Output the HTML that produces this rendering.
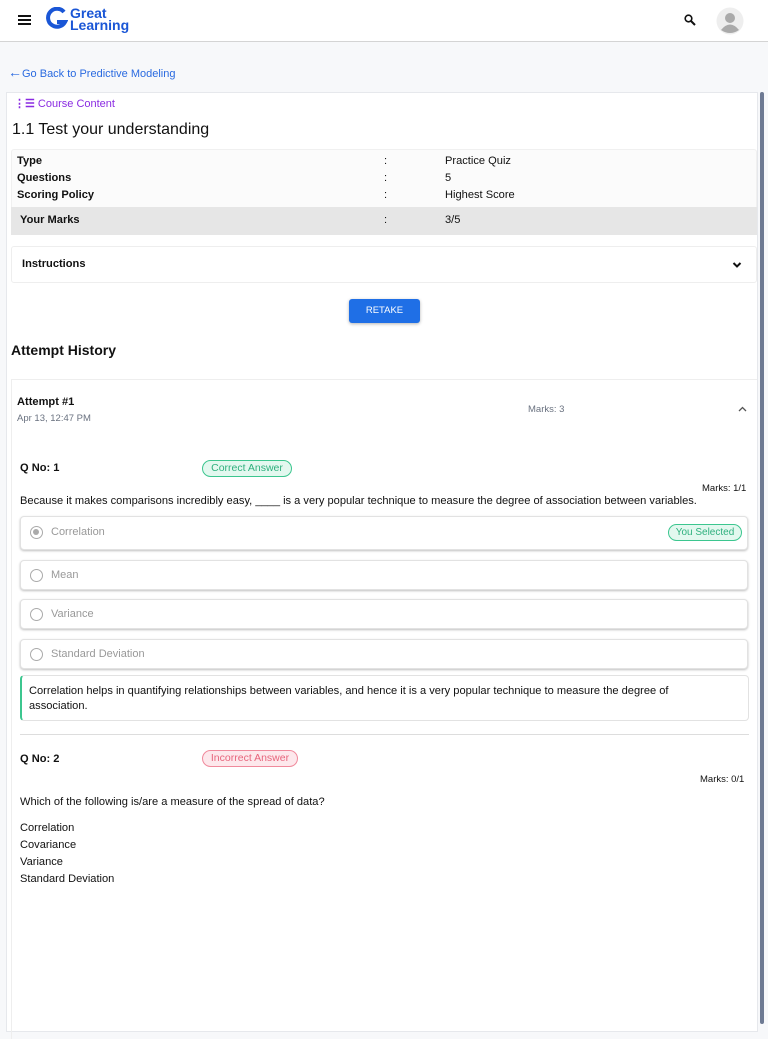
<!DOCTYPE html>
<html><head><meta charset="utf-8"><style>
*{box-sizing:border-box;margin:0;padding:0}
body{width:768px;height:1024px;overflow:hidden;background:#f7f8fa;font-family:"Liberation Sans",Arial,sans-serif;color:#111;position:relative}
.a{position:absolute;white-space:nowrap}
.hdr{position:absolute;left:0;top:0;width:768px;height:42px;background:#fff;border-bottom:1px solid #d4d4d4}
.card{position:absolute;left:6px;top:92px;width:752px;height:940px;background:#fff;border:1px solid #e6e8ec}
.sb{position:absolute;left:760px;top:92px;width:4px;height:932px;background:#6e7a93;border-radius:2px}
.t{font-size:11.1px}
.b{font-weight:bold}
.opt{position:absolute;left:20px;width:728px;background:#fff;border:1px solid #e2e2e2;border-radius:4px;box-shadow:0 1px 2px rgba(0,0,0,.25);font-size:11px;color:#999}
.opt .r{position:absolute;left:9px;width:13px;height:13px;border:1.5px solid #aaa;border-radius:50%}
.opt span{position:absolute;left:30px}
.pill{position:absolute;border-radius:10px;font-size:10.5px;text-align:center;line-height:15px;height:17px}
</style></head><body>
<div class="hdr">
 <div class="a" style="left:18px;top:15px;width:13px;height:2px;background:#111;box-shadow:0 4px 0 #111,0 8px 0 #111"></div>
 <svg class="a" style="left:46px;top:7px" width="22" height="24" viewBox="0 0 22 24"><path d="M18 5 A9 9 0 1 0 19 15 L11 15" fill="none" stroke="#1a56d6" stroke-width="4"/></svg>
 <div class="a b" style="left:70px;top:7px;font-size:14px;line-height:12px;color:#1a56d6">Great<br>Learning</div>
 <svg class="a" style="left:684px;top:14px" width="12" height="12" viewBox="0 0 12 12"><circle cx="4.5" cy="4.5" r="3.3" fill="none" stroke="#111" stroke-width="1.6"/><path d="M7 7 L11 11" stroke="#111" stroke-width="2"/></svg>
 <svg class="a" style="left:716px;top:7px" width="28" height="28" viewBox="0 0 28 28"><circle cx="14" cy="14" r="13.5" fill="#eee"/><circle cx="14" cy="11" r="5" fill="#aaa"/><path d="M5 23 Q14 12 23 23 Q14 29 5 23Z" fill="#aaa"/></svg>
</div>
<div class="a" style="left:8px;top:67px;font-size:11px;color:#2a6ae0"><span style="font-size:14px;line-height:11px">←</span>Go Back to Predictive Modeling</div>
<div class="card"></div>
<div class="sb"></div>
<div class="a" style="left:14px;top:97px;font-size:11px;color:#8a2be2"><b>⋮☰</b> Course Content</div>
<div class="a" style="left:12px;top:121px;font-size:16px">1.1 Test your understanding</div>
<div class="a" style="left:11px;top:149px;width:746px;height:86px;background:#fbfbfb;border:1px solid #f0f0f0;border-radius:3px"></div>
<div class="a" style="left:11px;top:207px;width:746px;height:28px;background:#e6e6e6"></div>
<div class="a t b" style="left:17px;top:155px">Type</div><div class="a t" style="left:384px;top:155px">:</div><div class="a t" style="left:445px;top:155px">Practice Quiz</div>
<div class="a t b" style="left:17px;top:172px">Questions</div><div class="a t" style="left:384px;top:172px">:</div><div class="a t" style="left:445px;top:172px">5</div>
<div class="a t b" style="left:17px;top:189px">Scoring Policy</div><div class="a t" style="left:384px;top:189px">:</div><div class="a t" style="left:445px;top:189px">Highest Score</div>
<div class="a t b" style="left:20px;top:214px">Your Marks</div><div class="a t" style="left:384px;top:214px">:</div><div class="a t" style="left:445px;top:214px">3/5</div>
<div class="a" style="left:11px;top:246px;width:746px;height:37px;border:1px solid #eee;border-radius:3px"></div>
<div class="a t b" style="left:22px;top:258px">Instructions</div>
<svg class="a" style="left:732px;top:261px" width="10" height="8" viewBox="0 0 10 8"><path d="M1.5 2 L5 5.5 L8.5 2" fill="none" stroke="#111" stroke-width="2"/></svg>
<div class="a" style="left:349px;top:299px;width:71px;height:24px;background:#1f6fe6;border-radius:3px;box-shadow:0 1px 3px rgba(0,0,0,.3);color:#fff;font-size:9.5px;text-align:center;line-height:24px">RETAKE</div>
<div class="a b" style="left:11px;top:342px;font-size:14px">Attempt History</div>
<div class="a" style="left:11px;top:379px;width:746px;height:660px;border-top:1px solid #eee;border-left:1px solid #eee"></div>
<div class="a t b" style="left:17px;top:396px">Attempt #1</div>
<div class="a" style="left:17px;top:413px;font-size:9.5px;color:#6a7280">Apr 13, 12:47 PM</div>
<div class="a" style="left:528px;top:404px;font-size:9.5px;color:#6a7280">Marks: 3</div>
<svg class="a" style="left:738px;top:406px" width="9" height="6" viewBox="0 0 9 6"><path d="M1 5 L4.5 1.5 L8 5" fill="none" stroke="#555" stroke-width="1.3"/></svg>
<div class="a t b" style="left:20px;top:462px">Q No: 1</div>
<div class="pill" style="left:202px;top:460px;width:90px;background:#e3f8ef;border:1px solid #3cc68f;color:#2fb07e">Correct Answer</div>
<div class="a" style="left:702px;top:483px;font-size:9.5px">Marks: 1/1</div>
<div class="a t" style="left:20px;top:495px">Because it makes comparisons incredibly easy, ____ is a very popular technique to measure the degree of association between variables.</div>
<div class="opt" style="top:516px;height:34px"><div class="r" style="top:9px"><div style="position:absolute;left:2px;top:2px;width:6px;height:6px;background:#aaa;border-radius:50%"></div></div><span style="top:9px">Correlation</span></div>
<div class="pill" style="left:668px;top:524px;width:74px;background:#e3f8ef;border:1px solid #3cc68f;color:#2fb07e;font-size:10px">You Selected</div>
<div class="opt" style="top:560px;height:30px"><div class="r" style="top:8px"></div><span style="top:8px">Mean</span></div>
<div class="opt" style="top:599px;height:30px"><div class="r" style="top:8px"></div><span style="top:8px">Variance</span></div>
<div class="opt" style="top:639px;height:30px"><div class="r" style="top:8px"></div><span style="top:8px">Standard Deviation</span></div>
<div class="a" style="left:20px;top:675px;width:729px;height:46px;border:1px solid #e2e2e2;border-left:2px solid #3cc68f;border-radius:4px"></div>
<div class="a t" style="left:29px;top:684px;line-height:15px">Correlation helps in quantifying relationships between variables, and hence it is a very popular technique to measure the degree of<br>association.</div>
<div class="a" style="left:20px;top:734px;width:729px;height:1px;background:#ddd"></div>
<div class="a t b" style="left:20px;top:753px">Q No: 2</div>
<div class="pill" style="left:202px;top:750px;width:96px;background:#fde8ec;border:1px solid #f08a9c;color:#e7657c">Incorrect Answer</div>
<div class="a" style="left:700px;top:774px;font-size:9.5px">Marks: 0/1</div>
<div class="a t" style="left:20px;top:796px">Which of the following is/are a measure of the spread of data?</div>
<div class="a t" style="left:20px;top:820px;line-height:17px">Correlation<br>Covariance<br>Variance<br>Standard Deviation</div>
</body></html>
